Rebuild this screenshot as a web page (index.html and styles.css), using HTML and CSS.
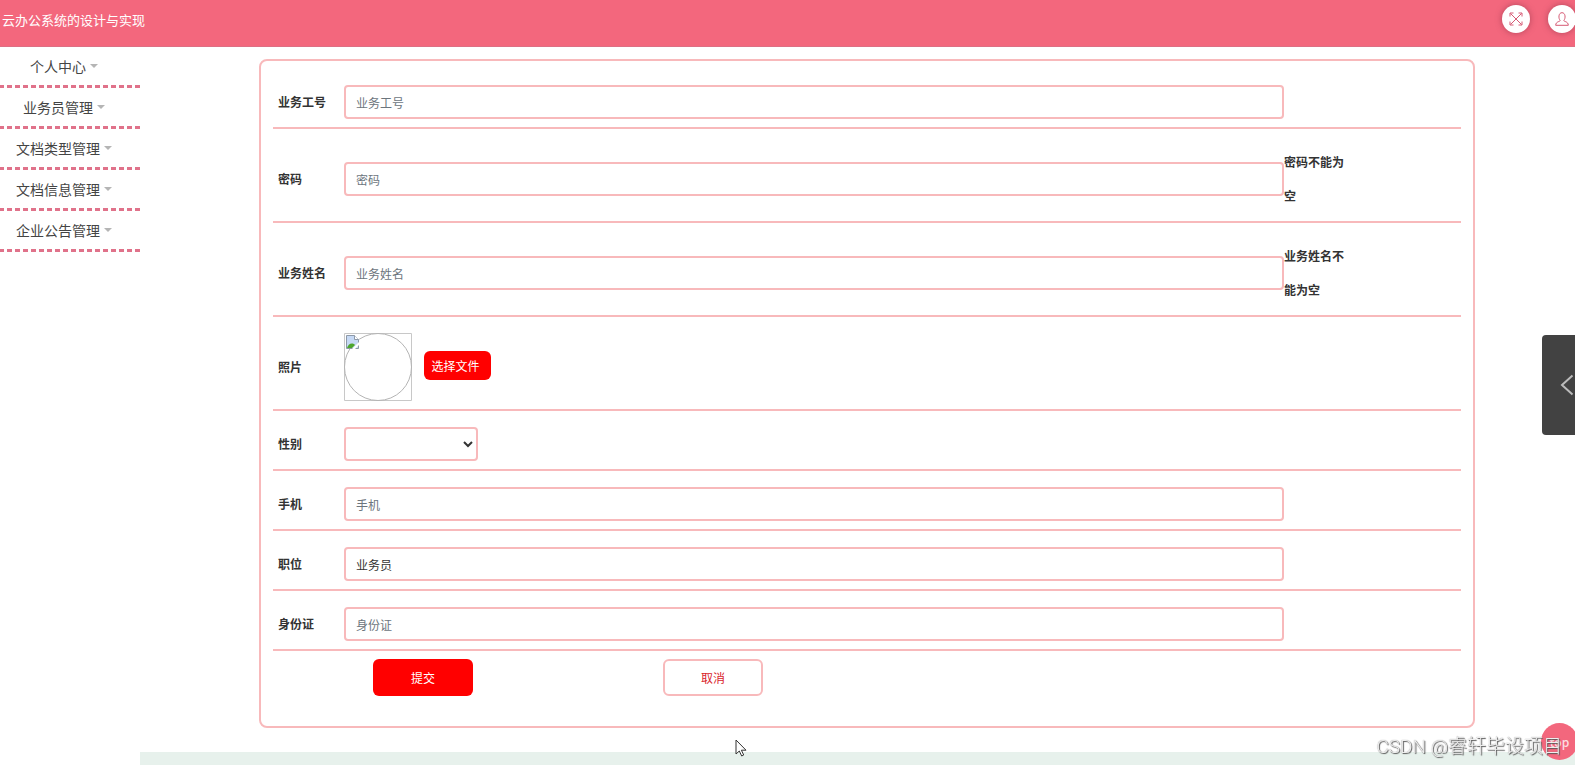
FILE: index.html
```html
<!DOCTYPE html>
<html lang="zh-CN">
<head>
<meta charset="utf-8">
<title>云办公系统的设计与实现</title>
<link rel="stylesheet" href="styles.css">
</head>
<body>
<header class="header">
  <h1 class="brand">云办公系统的设计与实现</h1>
  <div class="tools">
    <button class="tool" type="button" aria-label="全屏">
      <svg viewBox="0 0 14 14"><path d="M1 4.500V1h3.500M9.500 1H13v3.500M13 9.500V13H9.500M4.500 13H1V9.500M1.500 1.500l11 11M12.500 1.500l-11 11"/></svg>
    </button>
    <button class="tool" type="button" aria-label="用户">
      <svg viewBox="0 0 14 14"><path d="M5.200 8.400C3.200 6.500 3.400.7 7 .7s3.800 5.800 1.800 7.700c0 1.400 4.500.9 4.500 4.900H.7c0-4 4.500-3.500 4.500-4.900z"/></svg>
    </button>
  </div>
</header>
<div class="body">
  <nav class="sidebar">
    <a class="menu-item" href="#">个人中心</a>
    <a class="menu-item" href="#">业务员管理</a>
    <a class="menu-item" href="#">文档类型管理</a>
    <a class="menu-item" href="#">文档信息管理</a>
    <a class="menu-item" href="#">企业公告管理</a>
  </nav>
  <main class="main">
    <form class="card">
      <div class="row">
        <label class="label" for="number">业务工号</label>
        <input class="field" id="number" type="text" placeholder="业务工号">
        <span class="error"></span>
      </div>
      <div class="row">
        <label class="label" for="password">密码</label>
        <input class="field" id="password" type="password" placeholder="密码">
        <span class="error">密码不能为空</span>
      </div>
      <div class="row">
        <label class="label" for="name">业务姓名</label>
        <input class="field" id="name" type="text" placeholder="业务姓名">
        <span class="error">业务姓名不能为空</span>
      </div>
      <div class="row">
        <span class="label">照片</span>
        <svg class="photo" viewBox="0 0 68 68" role="img" aria-label="照片">
          <path class="frame" d="M.5.5h67v67H.5z"/>
          <circle class="ring" cx="34" cy="34" r="33.500"/>
          <path d="M2.500 2.500h8l4 4v9h-12z" fill="#c6d9f5" stroke="#8d99a8"/>
          <path d="M10.500 2.500v4h4" fill="#fff" stroke="#8d99a8"/>
          <path d="M3 15c1-4 5-6 8-3l-3 3z" fill="#4da62f"/>
          <path d="M8 16l8-8v3l-5 5z" fill="#fff"/>
        </svg>
        <button class="upload" type="button">选择文件</button>
      </div>
      <div class="row">
        <label class="label" for="gender">性别</label>
        <select class="field select" id="gender"><option></option><option>男</option><option>女</option></select>
      </div>
      <div class="row">
        <label class="label" for="phone">手机</label>
        <input class="field" id="phone" type="text" placeholder="手机">
        <span class="error"></span>
      </div>
      <div class="row">
        <label class="label" for="job">职位</label>
        <input class="field" id="job" type="text" value="业务员">
        <span class="error"></span>
      </div>
      <div class="row">
        <label class="label" for="idcard">身份证</label>
        <input class="field" id="idcard" type="text" placeholder="身份证">
        <span class="error"></span>
      </div>
      <div class="actions">
        <button class="btn btn-submit" type="button">提交</button>
        <button class="btn btn-cancel" type="button">取消</button>
      </div>
    </form>
    <div class="strip"></div>
  </main>
</div>
<button class="drawer" type="button" aria-label="展开">
  <svg viewBox="0 0 14 22"><path d="M12.500 1.500L2 11l10.500 9.500"/></svg>
</button>
<button class="to-top" type="button">top</button>
<div class="watermark">CSDN @睿轩毕设项目</div>
<svg class="cursor" viewBox="0 0 12 18"><path d="M1 1v14l3.300-3 2.400 5 2-1-2.300-4.800H11z"/></svg>
</body>
</html>
```
FILE: styles.css
```css
* {
  box-sizing: border-box;
}

body {
  margin: 0;
  min-height: 100vh;
  display: flex;
  flex-direction: column;
  overflow: hidden;
  background: #fff;
  color: #333;
  font-family: "Noto Sans CJK SC", sans-serif;
  font-size: 12px;
}

button,
input,
select {
  font: inherit;
}

.header {
  display: flex;
  justify-content: space-between;
  align-items: flex-start;
  height: 47px;
  padding: 5px 0 0 2px;
  background: #f3677d;
  border-bottom: 1px solid #dd6f84;
}

.brand {
  margin: 0;
  color: #fff;
  font-size: 13px;
  font-weight: 400;
  line-height: 30px;
}

.tools {
  display: flex;
  gap: 18px;
  margin-right: -1px;
}

.tool {
  display: grid;
  place-items: center;
  width: 28px;
  height: 28px;
  padding: 0;
  border: 0;
  border-radius: 50%;
  background: #fff;
  box-shadow: 0 0 6px rgba(120, 40, 60, 0.5);
}

.tool svg {
  width: 14px;
  height: 14px;
  fill: none;
  stroke: #d65a74;
}

.body {
  display: flex;
  flex: 1;
}

.sidebar {
  width: 140px;
}

.menu-item {
  display: flex;
  justify-content: center;
  align-items: center;
  gap: 4px;
  height: 41px;
  padding: 0 12px 4px 0;
  color: #444;
  font-size: 14px;
  text-decoration: none;
  background: repeating-linear-gradient(to left, #e0728a 0 5px, #fff 5px 8px) bottom / 100% 3px no-repeat;
}

.menu-item::after {
  content: "";
  border: 4px solid transparent;
  border-top-color: #b5b5b5;
  border-bottom: 0;
}

.main {
  display: flex;
  flex: 1;
  flex-direction: column;
}

.card {
  margin: 12px 100px 0 119px;
  padding: 8px 12px 30px;
  border: 2px solid #f8b9bb;
  border-radius: 8px;
}

.row {
  display: flex;
  align-items: center;
  padding: 16px 0 8px 5px;
  border-bottom: 2px solid #f8b9bb;
}

.label {
  width: 66px;
  padding-bottom: 2px;
  font-weight: 700;
}

.field {
  flex: 1;
  min-width: 0;
  height: 34px;
  padding: 0 10px;
  border: 2px solid #f8b9bb;
  border-radius: 4px;
  background: #fff;
  color: #333;
}

.field::placeholder {
  color: #6c757d;
}

.select {
  flex: none;
  width: 134px;
  padding: 0 2px;
}

.error {
  width: 66px;
  margin-right: 111px;
  font-weight: 700;
  line-height: 34px;
}

.photo {
  width: 68px;
  height: 68px;
}

.frame {
  fill: none;
  stroke: #c8c8c8;
}

.ring {
  fill: none;
  stroke: #b4b4b4;
}

.upload {
  width: 67px;
  height: 29px;
  margin: 0 0 4px 12px;
  padding: 0 4px 0 0;
  border: 0;
  border-radius: 6px;
  background: #f00;
  color: #fff;
}

.actions {
  display: flex;
  gap: 190px;
  padding: 8px 0 0 100px;
}

.btn {
  width: 100px;
  height: 37px;
  border-radius: 6px;
}

.btn-submit {
  border: 0;
  background: #f00;
  color: #fff;
}

.btn-cancel {
  border: 2px solid #f8b9bb;
  background: #fff;
  color: #d9232b;
}

.strip {
  height: 13px;
  margin-top: auto;
  background: #e7f1ec;
}

.drawer {
  position: fixed;
  top: 335px;
  right: 0;
  width: 33px;
  height: 100px;
  padding: 2px 1px 0 0;
  border: 0;
  border-radius: 4px 0 0 4px;
  background: #424242;
  text-align: right;
}

.drawer svg {
  width: 14px;
  height: 22px;
  fill: none;
  stroke: #bbb;
  stroke-width: 2;
}

.to-top {
  position: fixed;
  right: -3px;
  bottom: 5px;
  width: 37px;
  height: 37px;
  padding: 0;
  border: 0;
  border-radius: 50%;
  background: #f3677d;
  color: #fbdde2;
  font-weight: 500;
}

.watermark {
  position: fixed;
  right: 13px;
  bottom: 3px;
  color: #eee;
  font-family: Roboto, "Noto Sans CJK SC", sans-serif;
  font-size: 19px;
  font-weight: 300;
  line-height: 30px;
  text-shadow: 1px 1px 1px #555, 0 0 1px #888;
}

.cursor {
  position: fixed;
  left: 735px;
  top: 739px;
  width: 12px;
  height: 18px;
  fill: #fff;
  stroke: #333;
}
```
